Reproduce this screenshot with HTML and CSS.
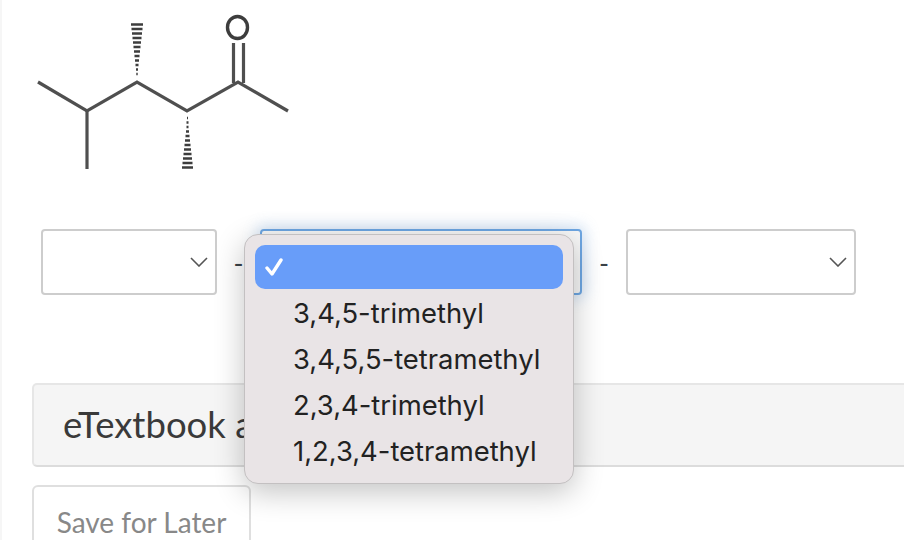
FILE: index.html
```html
<!DOCTYPE html>
<html lang="en">
<head>
<meta charset="utf-8">
<title>Name the molecule</title>
<link rel="stylesheet" href="styles.css">
</head>
<body>
<main class="page">
  <svg class="molecule" width="300" height="180" viewBox="0 0 300 180" aria-label="Skeletal structure of the ketone">
    <defs>
      <filter id="soft" x="-5%" y="-5%" width="110%" height="110%"><feGaussianBlur stdDeviation="0.6"/></filter>
    </defs>
    <g filter="url(#soft)">
      <g class="bond">
        <path d="M38 82 87 111 137 82 187 111 238 82 288 111"/>
        <path d="M87 111V169"/>
        <path d="M233.500 83V43M243.500 83V43"/>
      </g>
      <ellipse class="oxygen" cx="237.500" cy="27.500" rx="10" ry="11"/>
      <g class="hash">
        <path d="M131 24.500h12M131.500 29h11M132 33.500h10M132.500 38h9M133 42.500h8M133.500 47h7M134 51.500h6M134.500 56h5M135 60.500h4M135.500 65h3M136 69.500h2M136.300 74h1.400"/>
        <path d="M182 167.500h11M182.500 163h10M183 158.500h9M183.500 154h8M184 149.500h7M184.500 145h6M185 140.500h5M185.500 136h4M186 131.500h3M186.500 127h2M186.500 122.500h2M187 118h1"/>
      </g>
    </g>
  </svg>

  <div class="answer-row">
    <div class="select select-first">
      <svg class="chevron" width="18" height="10" viewBox="0 0 18 10"><path d="M1 1l8 8 8-8"/></svg>
    </div>
    <span class="dash">-</span>
    <div class="select select-middle"></div>
    <span class="dash">-</span>
    <div class="select select-last">
      <svg class="chevron" width="18" height="10" viewBox="0 0 18 10"><path d="M1 1l8 8 8-8"/></svg>
    </div>
  </div>

  <div class="banner">eTextbook and Media</div>
  <button class="save" type="button">Save for Later</button>

  <ul class="menu">
    <li class="option selected">
      <svg class="check" width="20" height="20" viewBox="0 0 20 20"><path d="M2 11l5 6L16 3"/></svg>
    </li>
    <li class="option">3,4,5-trimethyl</li>
    <li class="option">3,4,5,5-tetramethyl</li>
    <li class="option">2,3,4-trimethyl</li>
    <li class="option">1,2,3,4-tetramethyl</li>
  </ul>
</main>
</body>
</html>
```

FILE: styles.css
```css
* { box-sizing: border-box; }

html, body {
  margin: 0;
  height: 100%;
  background: #fff;
  overflow: hidden;
}

.page {
  position: relative;
  height: 540px;
  overflow: hidden;
  border-left: 2px solid #f6f6f6;
  font-family: Lato, "Open Sans", sans-serif;
}

.molecule {
  display: block;
  margin-left: -2px;
}

.bond path {
  fill: none;
  stroke: #505050;
  stroke-width: 3.200;
  stroke-linejoin: miter;
}

.oxygen {
  fill: none;
  stroke: #3c3c3c;
  stroke-width: 3.400;
}

.hash path {
  fill: none;
  stroke: #3c3c3c;
  stroke-width: 2.300;
}

.answer-row {
  display: flex;
  align-items: center;
  margin-top: 49px;
  padding-left: 39px;
}

.select {
  display: flex;
  align-items: center;
  justify-content: flex-end;
  height: 66px;
  padding-right: 7px;
  background: #fff;
  border: 2px solid #cdcdcd;
  border-radius: 4px;
}

.select-first { width: 176px; }
.select-last { width: 230px; }

.select-first + .dash { width: 43px; }

.select-middle {
  width: 322px;
  background: #f7f7f7;
  border-color: #6da6e2;
  box-shadow: 0 0 14px 4px rgba(110, 165, 225, 0.28);
}

.chevron path {
  fill: none;
  stroke: #555;
  stroke-width: 1.600;
}

.dash {
  width: 44px;
  text-align: center;
  font-size: 27px;
  line-height: 1;
  color: #3a4248;
}

.banner {
  width: 960px;
  height: 84px;
  margin: 88px 0 0 30px;
  padding: 0 0 2px 29px;
  display: flex;
  align-items: center;
  font-size: 36.500px;
  color: #3a3a3a;
  white-space: nowrap;
  background: #f5f5f5;
  border: 2px solid #e6e6e6;
  border-bottom-color: #dcdcdc;
  border-radius: 5px;
}

.save {
  display: block;
  width: 219px;
  height: 76px;
  margin: 18px 0 0 30px;
  padding: 0 0 2px;
  font-family: Lato, "Open Sans", sans-serif;
  font-size: 28px;
  color: #888;
  background: #fff;
  border: 2px solid #dfdfdf;
  border-radius: 6px;
  text-align: center;
}

.menu {
  position: absolute;
  left: 242px;
  top: 234px;
  width: 330px;
  height: 250px;
  margin: 0;
  padding: 10px;
  list-style: none;
  background: #e9e4e6;
  border: 1px solid #c3c0c1;
  border-radius: 14px;
  box-shadow: 0 8px 30px rgba(0, 0, 0, 0.24);
  font-family: Inter, "Liberation Sans", sans-serif;
  font-size: 27.400px;
  color: #222;
}

.option {
  display: flex;
  align-items: center;
  height: 46px;
  padding-left: 38px;
  white-space: nowrap;
}

.selected {
  height: 44px;
  margin-bottom: 1px;
  padding-left: 10px;
  background: #689df9;
  border-radius: 10px;
}

.check path {
  fill: none;
  stroke: #fff;
  stroke-width: 3.400;
  stroke-linecap: round;
  stroke-linejoin: round;
}
```
